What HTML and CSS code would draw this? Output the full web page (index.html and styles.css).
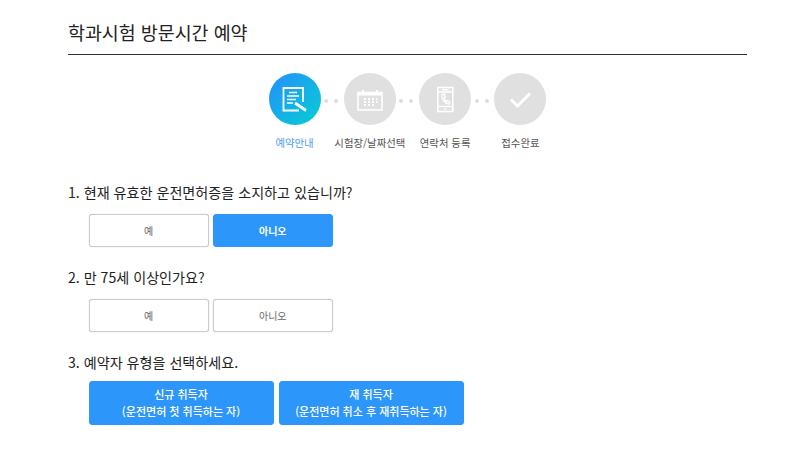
FILE: index.html
```html
<!DOCTYPE html>
<html lang="ko">
<head>
<meta charset="utf-8">
<title>학과시험 방문시간 예약</title>
<link rel="stylesheet" href="styles.css">
</head>
<body>
<main class="page">
  <h1 class="title">학과시험 방문시간 예약</h1>
  <ol class="steps">
    <li class="step active">
      <span class="circle">
        <svg viewBox="0 0 52 52" width="52" height="52" fill="none" stroke="#fff">
          <path d="M34 29V15H14.500V37.500H30" stroke-width="1.800"/>
          <path d="M20 19.500H28M18 23H30M18 26.500H27M18 30H24" stroke-width="1.600"/>
          <path d="M26 30L37 37.500" stroke-width="2.800"/>
        </svg>
      </span>
      <span class="label">예약안내</span>
    </li>
    <li class="step">
      <span class="circle">
        <svg viewBox="0 0 52 52" width="52" height="52" fill="none" stroke="#fff">
          <path d="M14 19.500H38V37H14Z" stroke-width="1.600"/>
          <path d="M14 19.500H38V22H14Z" fill="#fff" stroke-width="1"/>
          <path d="M19 17V21M33 17V21" stroke-width="2"/>
          <path d="M20 26H22M24 26H26M28 26H30M32 26H33.500M20 29H22M24 29H26M28 29H30M32 29H33.500M20 32H22M24 32H26M28 32H30" stroke-width="1.800"/>
        </svg>
      </span>
      <span class="label">시험장/날짜선택</span>
    </li>
    <li class="step">
      <span class="circle">
        <svg viewBox="0 0 52 52" width="52" height="52" fill="none" stroke="#fff">
          <rect x="18.800" y="14.500" width="15" height="24" stroke-width="1.600"/>
          <path d="M18.800 19H33.800M18.800 33.500H33.800M23 16.800H29.500" stroke-width="1.400"/>
          <circle cx="26.300" cy="36" r="1" fill="#fff" stroke="none"/>
          <path d="M23 21.500C22.500 26 25.500 30.500 30 31L31 28.800L28.500 27.500L27.300 28.300C26.300 27.300 25.500 26 25.200 24.800L26.300 24L25.300 21Z" stroke-width="1.300"/>
        </svg>
      </span>
      <span class="label">연락처 등록</span>
    </li>
    <li class="step">
      <span class="circle">
        <svg viewBox="0 0 52 52" width="52" height="52" fill="none" stroke="#fff">
          <path d="M17 26.500L23.500 33L36 20.500" stroke-width="3"/>
        </svg>
      </span>
      <span class="label">접수완료</span>
    </li>
  </ol>
  <section class="question q1">
    <h2 class="q-title">1. 현재 유효한 운전면허증을 소지하고 있습니까?</h2>
    <div class="choices">
      <button class="choice">예</button>
      <button class="choice selected">아니오</button>
    </div>
  </section>
  <section class="question q2">
    <h2 class="q-title">2. 만 75세 이상인가요?</h2>
    <div class="choices">
      <button class="choice">예</button>
      <button class="choice">아니오</button>
    </div>
  </section>
  <section class="question q3">
    <h2 class="q-title">3. 예약자 유형을 선택하세요.</h2>
    <div class="choices wide">
      <button class="choice selected tall">신규 취득자<br>(운전면허 첫 취득하는 자)</button>
      <button class="choice selected tall">재 취득자<br>(운전면허 취소 후 재취득하는 자)</button>
    </div>
  </section>
</main>
</body>
</html>
```
FILE: styles.css
```css
* { box-sizing: border-box; }
html, body { margin: 0; padding: 0; background: #fff; }
body {
  font-family: "Noto Sans CJK KR", "Noto Sans", sans-serif;
  color: #222;
  height: 459px;
  overflow: hidden;
}
.page { width: 679px; margin-left: 68px; }
.title {
  margin: 0;
  height: 55px;
  padding-top: 19px;
  font-size: 18.400px;
  line-height: 26px;
  font-weight: 400;
  border-bottom: 1px solid #333;
}
.steps {
  list-style: none;
  margin: 18px 0 0;
  padding: 0;
  display: flex;
  justify-content: center;
}
.step {
  position: relative;
  width: 75.300px;
  display: flex;
  flex-direction: column;
  align-items: center;
}
.step:not(:last-child)::after {
  content: "";
  position: absolute;
  left: 67px;
  top: 26px;
  width: 4px;
  height: 4px;
  border-radius: 50%;
  background: #ddd;
  box-shadow: 10px 0 0 #ddd;
}
.circle {
  width: 52px;
  height: 52px;
  border-radius: 50%;
  background: #e0e0e0;
  display: block;
}
.circle svg { display: block; }
.active .circle { background: linear-gradient(135deg, #2196f8 12%, #08c8d6 88%); }
.label {
  margin-top: 10px;
  font-size: 10.400px;
  line-height: 16px;
  color: #555;
  white-space: nowrap;
}
.active .label { color: #4a9df5; }
.q1 { margin-top: 30px; }
.q2 { margin-top: 19px; }
.q3 { margin-top: 19px; }
.q-title {
  margin: 0;
  font-size: 14.100px;
  line-height: 22px;
  font-weight: 400;
  color: #222;
}
.choices {
  display: flex;
  gap: 4.500px;
  margin: 11px 0 0 20.500px;
}
.choice {
  width: 120px;
  height: 33px;
  padding: 0;
  background: #fff;
  border: 1px solid #ccc;
  border-radius: 3px;
  box-shadow: 0 0 1px #bbb;
  font-family: inherit;
  font-size: 10px;
  line-height: 17px;
  color: #666;
}
.choice + .choice { width: 119.500px; }
.selected {
  background: #2c96fb;
  border-color: #2c96fb;
  color: #fff;
  font-weight: 700;
  box-shadow: none;
}
.wide { gap: 5px; margin-top: 8px; }
.tall, .choice + .tall {
  width: 185px;
  height: 44px;
  font-weight: 500;
  font-size: 11px;
}
```
